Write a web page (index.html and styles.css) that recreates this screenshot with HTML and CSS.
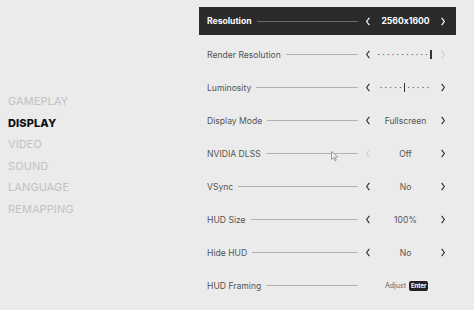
FILE: index.html
```html
<!DOCTYPE html>
<html>
<head>
<meta charset="utf-8">
<link rel="stylesheet" href="styles.css">
</head>
<body>
<div class="screen">
  <nav class="menu">
    <div class="menu-item">GAMEPLAY</div>
    <div class="menu-item active">DISPLAY</div>
    <div class="menu-item">VIDEO</div>
    <div class="menu-item">SOUND</div>
    <div class="menu-item">LANGUAGE</div>
    <div class="menu-item">REMAPPING</div>
  </nav>
  <section class="settings">
    <div class="row selected">
      <span class="label">Resolution</span><span class="rule"></span>
      <div class="control">
        <svg class="chev" viewBox="0 0 6 10"><polyline points="4.5,1 1.5,5 4.5,9"/></svg>
        <span class="value">2560x1600</span>
        <svg class="chev" viewBox="0 0 6 10"><polyline points="1.5,1 4.5,5 1.5,9"/></svg>
      </div>
    </div>
    <div class="row">
      <span class="label">Render Resolution</span><span class="rule"></span>
      <div class="control">
        <svg class="chev" viewBox="0 0 6 10"><polyline points="4.5,1 1.5,5 4.5,9"/></svg>
        <span class="value slider"><span class="dots">···········</span><span class="knob"></span></span>
        <svg class="chev off" viewBox="0 0 6 10"><polyline points="1.5,1 4.5,5 1.5,9"/></svg>
      </div>
    </div>
    <div class="row">
      <span class="label">Luminosity</span><span class="rule"></span>
      <div class="control">
        <svg class="chev" viewBox="0 0 6 10"><polyline points="4.5,1 1.5,5 4.5,9"/></svg>
        <span class="value slider"><span class="dots">·····</span><span class="knob"></span><span class="dots">·····</span></span>
        <svg class="chev" viewBox="0 0 6 10"><polyline points="1.5,1 4.5,5 1.5,9"/></svg>
      </div>
    </div>
    <div class="row">
      <span class="label">Display Mode</span><span class="rule"></span>
      <div class="control">
        <svg class="chev" viewBox="0 0 6 10"><polyline points="4.5,1 1.5,5 4.5,9"/></svg>
        <span class="value">Fullscreen</span>
        <svg class="chev" viewBox="0 0 6 10"><polyline points="1.5,1 4.5,5 1.5,9"/></svg>
      </div>
    </div>
    <div class="row">
      <span class="label">NVIDIA DLSS</span><span class="rule"></span>
      <div class="control">
        <svg class="chev off" viewBox="0 0 6 10"><polyline points="4.5,1 1.5,5 4.5,9"/></svg>
        <span class="value">Off</span>
        <svg class="chev" viewBox="0 0 6 10"><polyline points="1.5,1 4.5,5 1.5,9"/></svg>
      </div>
      <svg class="cursor" viewBox="0 0 8 11"><path d="M0.5,0.5 L0.5,8.5 L2.6,6.6 L4,9.8 L5.3,9.2 L3.9,6.1 L6.8,6 Z"/></svg>
    </div>
    <div class="row">
      <span class="label">VSync</span><span class="rule"></span>
      <div class="control">
        <svg class="chev" viewBox="0 0 6 10"><polyline points="4.5,1 1.5,5 4.5,9"/></svg>
        <span class="value">No</span>
        <svg class="chev" viewBox="0 0 6 10"><polyline points="1.5,1 4.5,5 1.5,9"/></svg>
      </div>
    </div>
    <div class="row">
      <span class="label">HUD Size</span><span class="rule"></span>
      <div class="control">
        <svg class="chev" viewBox="0 0 6 10"><polyline points="4.5,1 1.5,5 4.5,9"/></svg>
        <span class="value">100%</span>
        <svg class="chev" viewBox="0 0 6 10"><polyline points="1.5,1 4.5,5 1.5,9"/></svg>
      </div>
    </div>
    <div class="row">
      <span class="label">Hide HUD</span><span class="rule"></span>
      <div class="control">
        <svg class="chev" viewBox="0 0 6 10"><polyline points="4.5,1 1.5,5 4.5,9"/></svg>
        <span class="value">No</span>
        <svg class="chev" viewBox="0 0 6 10"><polyline points="1.5,1 4.5,5 1.5,9"/></svg>
      </div>
    </div>
    <div class="row">
      <span class="label">HUD Framing</span><span class="rule"></span>
      <div class="control adjust">
        <span class="adjust-text">Adjust</span><span class="key">Enter</span>
      </div>
    </div>
  </section>
</div>
</body>
</html>
```

FILE: styles.css
```css
html, body {
  margin: 0;
  padding: 0;
}
body {
  width: 474px;
  height: 310px;
  overflow: hidden;
  background: #ebebeb;
  font-family: Inter, "Noto Sans", sans-serif;
  font-feature-settings: "calt" 0;
}
.screen {
  display: flex;
  height: 310px;
}
.menu {
  width: 199px;
  padding: 91px 0 0 8px;
  box-sizing: border-box;
  display: flex;
  flex-direction: column;
}
.menu-item {
  font-size: 11px;
  line-height: 21.6px;
  color: #c2c2c2;
  letter-spacing: 0.1px;
}
.menu-item.active {
  color: #111;
  font-weight: 800;
}
.settings {
  width: 257px;
  padding-top: 5px;
  display: flex;
  flex-direction: column;
}
.row {
  position: relative;
  height: 33px;
  display: flex;
  align-items: center;
  padding-left: 8px;
  box-sizing: border-box;
  font-size: 8.6px;
  color: #555;
}
.row.selected {
  background: #2b2b2b;
  height: 28px;
  margin: 2px 0 3px;
  color: #fff;
  font-weight: 700;
}
.label {
  white-space: nowrap;
}
.rule {
  flex: 1;
  height: 1px;
  background: #b0b0b0;
  margin: 0 0 0 5px;
}
.selected .rule {
  background: #6a6a6a;
}
.control {
  width: 98px;
  display: flex;
  align-items: center;
  justify-content: space-between;
  padding: 0 10px 0 7px;
  box-sizing: border-box;
}
.chev {
  width: 6px;
  height: 9px;
  fill: none;
  stroke: #333;
  stroke-width: 1.3;
}
.selected .chev {
  stroke: #fff;
}
.chev.off {
  stroke: #cfcfcf;
}
.value {
  flex: 1;
  text-align: center;
  color: #555;
}
.selected .value {
  color: #fff;
}
.slider {
  display: flex;
  align-items: center;
  justify-content: center;
  color: #444;
}
.dots {
  letter-spacing: 2.2px;
  font-size: 9px;
}
.knob {
  width: 1.5px;
  height: 9px;
  background: #333;
  margin: 0 2px 0 0;
}
.control.adjust {
  justify-content: flex-start;
  padding-left: 27px;
}
.adjust-text {
  font-size: 7px;
  color: #666;
  margin-right: 3px;
}
.key {
  font-size: 6px;
  font-weight: 700;
  color: #fff;
  background: #222;
  border-radius: 2px;
  padding: 1px 2px;
  line-height: 8px;
}
.cursor {
  position: absolute;
  left: 132px;
  top: 14px;
  width: 8px;
  height: 11px;
  fill: #f4f4f4;
  stroke: #888;
  stroke-width: 0.8;
}
```
